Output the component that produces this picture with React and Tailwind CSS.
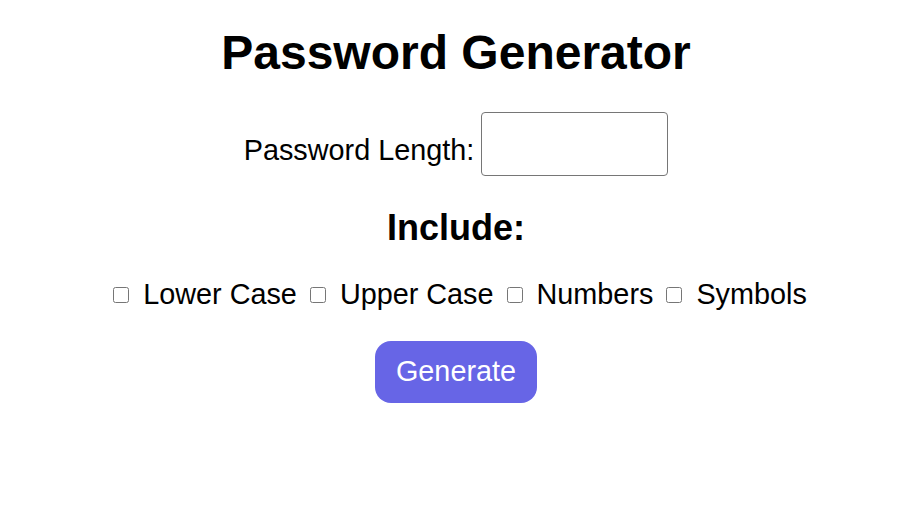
import React, { useState } from "react";

const options = ["Lower Case", "Upper Case", "Numbers", "Symbols"];

export default function App() {
  const [length, setLength] = useState("");
  const [checked, setChecked] = useState({});

  return (
    <div className="min-h-screen bg-white text-black flex flex-col items-center pr-[7px] font-['Liberation_Sans',Arial,sans-serif]">
      <h1 className="mt-[26px] text-[48px] leading-[54px] font-bold">Password Generator</h1>

      <div className="mt-[32px] flex items-center gap-[7px]">
        <label className="text-[28.8px] leading-[33px] mt-[12px]">Password Length:</label>
        <input
          type="number"
          value={length}
          onChange={(e) => setLength(e.target.value)}
          className="w-[187px] h-[64px] border border-[#767676] rounded-[4px] px-2 text-[24px] outline-none"
        />
      </div>

      <h2 className="mt-[31px] text-[36px] leading-[42px] font-bold">Include:</h2>

      <div className="mt-[29px] ml-[8px] flex items-center text-[28.8px] leading-[33px]">
        {options.map((opt, i) => (
          <label key={opt} className="flex items-center">
            <input
              type="checkbox"
              checked={!!checked[opt]}
              onChange={() => setChecked({ ...checked, [opt]: !checked[opt] })}
              className={`w-[16px] h-[16px] mr-[14px] ${i === 0 ? "ml-0" : "ml-[13px]"}`}
            />
            {opt}
          </label>
        ))}
      </div>

      <button className="mt-[30px] w-[162px] h-[62px] rounded-[16px] bg-[#6765e6] text-white text-[28.8px]">
        Generate
      </button>
    </div>
  );
}
